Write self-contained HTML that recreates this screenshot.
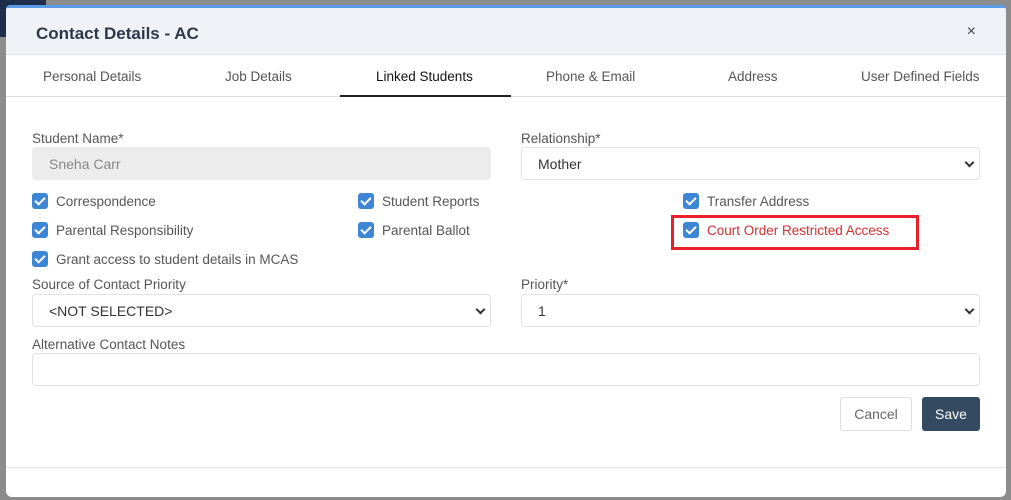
<!DOCTYPE html>
<html><head><style>
*{box-sizing:border-box;margin:0;padding:0}
body{width:1011px;height:500px;background:#8c8c8c;font-family:"Liberation Sans",sans-serif;position:relative;overflow:hidden}
.nav{position:absolute;left:0;top:0;width:46px;height:37px;background:#1f2d4d}
.modal{position:absolute;left:6px;top:5px;width:1000px;height:492px;background:#fff;border-top:3px solid #5a9be8;border-radius:4px 4px 6px 6px;overflow:hidden}
.hdr{height:47px;background:#eff3f8;border-bottom:1px solid #dde3ea;position:relative}
.hdr h1{position:absolute;left:30px;top:16px;font-size:17px;font-weight:bold;color:#2d3748}
.x{position:absolute;right:30px;top:15px;font-size:16px;color:#444}
.tabs{height:42px;border-bottom:1px solid #ddd;position:relative;font-size:13.5px;color:#555}
.tabs span{position:absolute;top:14px}
.act{position:absolute;left:334px;width:171px;bottom:-1px;height:2px;background:#222}
.c{position:absolute;left:0;top:-3px;width:1000px;height:500px}
.lbl{position:absolute;font-size:13.5px;color:#555}
.inp{position:absolute;height:33px;border:1px solid #dfe2e6;border-radius:4px;font-size:14px;color:#333;padding:8px 16px}
.chev{position:absolute;right:6px;top:11px;width:7px;height:7px;border-right:2px solid #333;border-bottom:2px solid #333;transform:rotate(45deg)}
.cb{position:absolute;font-size:13.5px;color:#555;display:flex;align-items:center}
.cb i{display:inline-block;width:16px;height:16px;background:#3d86d4;border-radius:3px;margin-right:8px;position:relative}
.cb i:after{content:"";position:absolute;left:5px;top:2px;width:4px;height:8px;border-right:2px solid #fff;border-bottom:2px solid #fff;transform:rotate(45deg)}
.btn{position:absolute;height:34px;border-radius:3px;font-size:14px;display:flex;align-items:center;justify-content:center}
</style></head><body>
<div class="nav"></div>
<div class="modal">
<div class="hdr"><h1>Contact Details - AC</h1><span class="x">×</span></div>
<div class="tabs">
<span style="left:37px">Personal Details</span>
<span style="left:219px">Job Details</span>
<span style="left:370px;color:#111">Linked Students</span>
<span style="left:540px">Phone &amp; Email</span>
<span style="left:722px">Address</span>
<span style="left:855px">User Defined Fields</span>
<div class="act"></div>
</div>
<div class="c">
<div class="lbl" style="left:26px;top:126px">Student Name*</div>
<div class="inp" style="left:26px;top:142px;width:459px;background:#ececec;border-color:#ececec;color:#888">Sneha Carr</div>
<div class="lbl" style="left:515px;top:126px">Relationship*</div>
<div class="inp" style="left:515px;top:142px;width:459px">Mother<div class="chev"></div></div>
<div class="cb" style="left:26px;top:188px"><i></i>Correspondence</div>
<div class="cb" style="left:352px;top:188px"><i></i>Student Reports</div>
<div class="cb" style="left:677px;top:188px"><i></i>Transfer Address</div>
<div class="cb" style="left:26px;top:217px"><i></i>Parental Responsibility</div>
<div class="cb" style="left:352px;top:217px"><i></i>Parental Ballot</div>
<div style="position:absolute;left:665px;top:210px;width:248px;height:35px;border:3px solid #e8202a"></div>
<div class="cb" style="left:677px;top:217px;color:#d3312f"><i></i>Court Order Restricted Access</div>
<div class="cb" style="left:26px;top:246px"><i></i>Grant access to student details in MCAS</div>
<div class="lbl" style="left:26px;top:272px">Source of Contact Priority</div>
<div class="inp" style="left:26px;top:289px;width:459px">&lt;NOT SELECTED&gt;<div class="chev"></div></div>
<div class="lbl" style="left:515px;top:272px">Priority*</div>
<div class="inp" style="left:515px;top:289px;width:459px">1<div class="chev"></div></div>
<div class="lbl" style="left:26px;top:332px">Alternative Contact Notes</div>
<div class="inp" style="left:26px;top:348px;width:948px"></div>
<div class="btn" style="left:834px;top:392px;width:72px;border:1px solid #ddd;color:#666">Cancel</div>
<div class="btn" style="left:916px;top:392px;width:58px;background:#344a61;color:#fff">Save</div>
</div>
<div style="position:absolute;left:0;right:0;top:459px;border-top:1px solid #e5e5e5"></div>
</div>
</body></html>
